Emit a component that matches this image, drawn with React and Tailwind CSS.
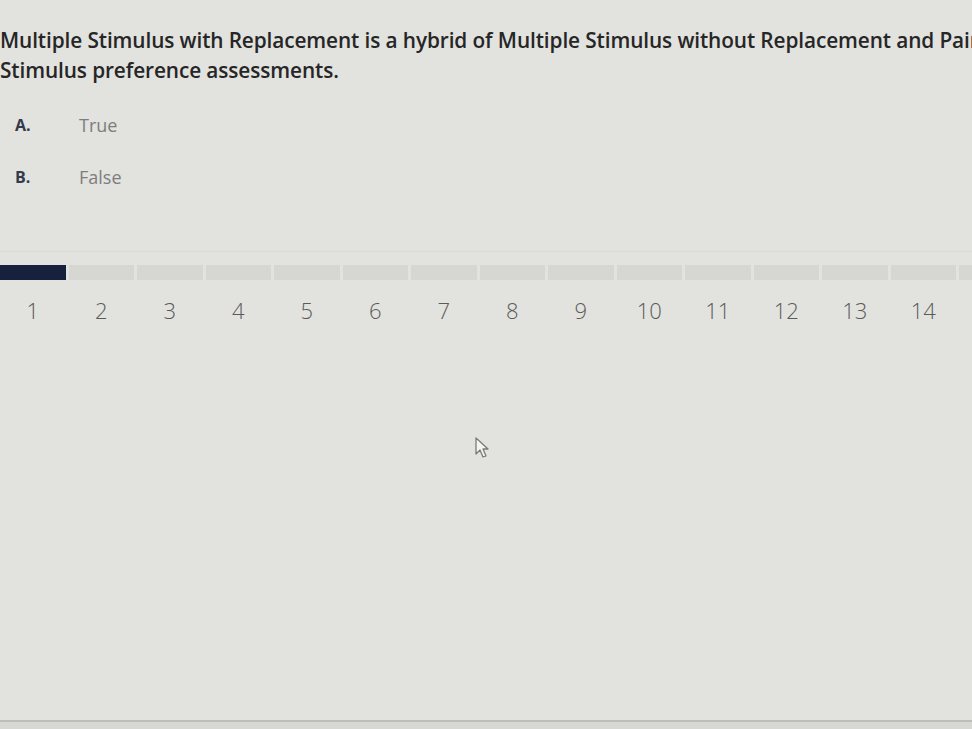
import React from "react";

const steps = [1, 2, 3, 4, 5, 6, 7, 8, 9, 10, 11, 12, 13, 14, 15];

function Cursor() {
  return (
    <svg width="18" height="24" viewBox="0 0 18 24" className="absolute left-[474px] top-[436px]">
      <path
        d="M2 2 L2 18 L6 14 L9 21 L12 20 L9 13 L14 13 Z"
        fill="#f4f4f2"
        stroke="#7a7a7a"
        strokeWidth="1.3"
        strokeLinejoin="round"
      />
    </svg>
  );
}

export default function App() {
  return (
    <div
      className="relative w-[972px] h-[729px] overflow-hidden bg-[#e2e2df] text-[#2b2b2b]"
      style={{ fontFamily: "'Open Sans', 'Liberation Sans', sans-serif" }}
    >
      {/* QUESTION */}
      <div className="pt-[25px] whitespace-nowrap text-[20.8px] leading-[30px] font-semibold text-[#262626] tracking-[-0.1px]">
        Multiple Stimulus with Replacement is a hybrid of Multiple Stimulus without Replacement and Paired
        <br />
        Stimulus preference assessments.
      </div>

      {/* ANSWERS */}
      <div className="mt-[29px] flex flex-col gap-[30px]">
        <div className="flex items-center h-[22px]">
          <span className="w-[79px] pl-[15px] text-[16px] font-bold text-[#333a4a]">A.</span>
          <span className="text-[18px] text-[#7d7d7d]">True</span>
        </div>
        <div className="flex items-center h-[22px]">
          <span className="w-[79px] pl-[15px] text-[16px] font-bold text-[#333a4a]">B.</span>
          <span className="text-[18px] text-[#7d7d7d]">False</span>
        </div>
      </div>

      <div className="mt-[63px] h-px bg-[#dadad6]" />

      {/* PROGRESS */}
      <div className="mt-[13px] flex gap-[3px] w-[1030px]">
        {steps.map((n) => (
          <div key={n} className="w-[65.5px] shrink-0 flex flex-col items-center">
            <div
              className={
                n === 1
                  ? "w-full h-[15px] bg-[#17203d]"
                  : "w-full h-[15px] bg-[#d6d6d3]"
              }
            />
            <span className="mt-[15px] text-[22px] font-light text-[#5a5a5a] leading-[30px]">
              {n <= 14 ? n : ""}
            </span>
          </div>
        ))}
      </div>

      <div className="absolute left-0 right-0 top-[720px] h-[2px] bg-[#bdbdba]" />
      <div className="absolute left-0 right-0 top-[722px] bottom-0 bg-[#d7d7d4]" />

      <Cursor />
    </div>
  );
}
